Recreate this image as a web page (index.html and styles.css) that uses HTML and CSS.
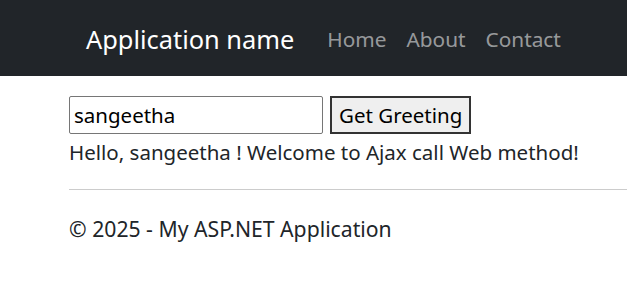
FILE: index.html
```html
<!DOCTYPE html>
<html>
<head>
<meta charset="utf-8">
<link rel="stylesheet" href="styles.css">
</head>
<body>
<nav class="navbar">
  <a class="brand" href="#">Application name</a>
  <ul class="nav">
    <li><a href="#">Home</a></li>
    <li><a href="#">About</a></li>
    <li><a href="#">Contact</a></li>
  </ul>
</nav>
<main class="container">
  <div class="form-row">
    <input class="name-input" type="text" value="sangeetha">
    <button class="btn">Get Greeting</button>
  </div>
  <div class="greeting">Hello, sangeetha ! Welcome to Ajax call Web method!</div>
  <hr class="rule">
  <footer class="footer">© 2025 - My ASP.NET Application</footer>
</main>
</body>
</html>
```
FILE: styles.css
```css
html, body {
  margin: 0;
  padding: 0;
}
body {
  font-family: "Noto Sans", "Open Sans", sans-serif;
  font-size: 20.5px;
  color: #212529;
  background: #fff;
}
.navbar {
  background: #212529;
  height: 76px;
  display: flex;
  align-items: center;
  padding-left: 86px;
  padding-top: 2px;
  box-sizing: border-box;
}
.brand {
  color: #fff;
  text-decoration: none;
  font-size: 25.4px;
  margin-right: 33px;
}
.nav {
  list-style: none;
  margin: 0;
  padding: 0;
  display: flex;
  gap: 20px;
}
.nav a {
  color: rgba(255,255,255,0.55);
  text-decoration: none;
  font-size: 20.8px;
}
.container {
  padding-left: 69px;
  padding-top: 20px;
}
.form-row {
  display: flex;
  gap: 7px;
  align-items: center;
}
.name-input {
  width: 254px;
  height: 38px;
  box-sizing: border-box;
  border: 1px solid #767676;
  border-radius: 2px;
  font-family: inherit;
  font-size: 20.5px;
  padding: 0 4px;
  color: #000;
}
.btn {
  height: 38px;
  box-sizing: border-box;
  border: 2px solid #333;
  background: #efefef;
  font-family: inherit;
  font-size: 20.5px;
  color: #000;
  padding: 0 7px;
}
.greeting {
  margin-top: 3px;
  line-height: 30px;
}
.rule {
  margin: 22px 0 0 0;
  border: 0;
  border-top: 1px solid #ccc;
}
.footer {
  margin-top: 24px;
  line-height: 30px;
  font-size: 21.2px;
}
```
